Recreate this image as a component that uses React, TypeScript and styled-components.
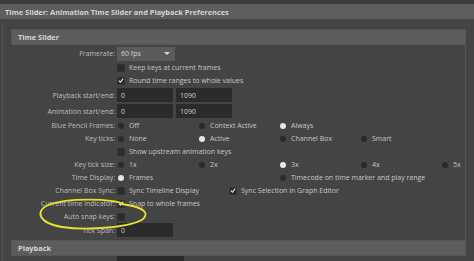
import React from 'react';
import styled, { createGlobalStyle } from 'styled-components';

const GlobalStyle = createGlobalStyle`
 html, body {
  margin: 0;
  padding: 0;
  background: #444444;
  overflow: hidden;
 }
 body {
  font-family: 'Open Sans', 'Noto Sans', sans-serif;
  color: #c6c6c6;
 }
`;

const Window = styled.div`
 position: relative;
 width: 474px;
 height: 261px;
 background: #444444;
 overflow: hidden;
`;

const TopStrip = styled.div`
 height: 4px;
 background: #3c3c3c;
`;

const TitleBar = styled.div`
 height: 15px;
 display: flex;
 align-items: center;
 padding-left: 5px;
 background: #5e5e5e;
 color: #d4d4d4;
 font-weight: 700;
 font-size: 7.4px;
 white-space: nowrap;
`;

const Frame = styled.div`
 margin: 3px 0 0 2px;
 border-left: 1px solid #555555;
 padding: 7px 8px 0 8px;
`;

const SectionHeader = styled.div`
 height: 14px;
 display: flex;
 align-items: center;
 padding-left: 6px;
 background: #5d5d5d;
 border: 1px solid #555555;
 color: #d6d6d6;
 font-weight: 700;
 font-size: 7.4px;
`;

const Panel = styled.div`
 border-right: 1px solid #555555;
 padding: 1px 0 3px;
`;

const Row = styled.div<{ $h?: number }>`
 display: grid;
 grid-template-columns: 104px 1fr;
 column-gap: 2px;
 align-items: center;
 height: ${({ $h }) => $h ?? 13}px;
 font-size: 7px;
 white-space: nowrap;
`;

const Label = styled.div`
 text-align: right;
 color: #bdbdbd;
`;

const Controls = styled.div`
 display: flex;
 align-items: center;
`;

const Dropdown = styled.div`
 width: 58px;
 height: 14px;
 box-sizing: border-box;
 display: flex;
 align-items: center;
 justify-content: space-between;
 padding: 0 5px 0 4px;
 background: #5b5b5b;
 color: #d2d2d2;
`;

const Arrow = styled.span`
 width: 0;
 height: 0;
 border-left: 3px solid transparent;
 border-right: 3px solid transparent;
 border-top: 3px solid #d8d8d8;
`;

const Field = styled.div<{ $w?: number }>`
 width: ${({ $w }) => $w ?? 56}px;
 height: 14px;
 box-sizing: border-box;
 display: flex;
 align-items: center;
 padding-left: 4px;
 margin-right: 3px;
 background: #2b2b2b;
 color: #cfcfcf;
`;

const Box = styled.span`
 width: 8px;
 height: 8px;
 box-sizing: border-box;
 display: inline-flex;
 align-items: center;
 justify-content: center;
 background: #2b2b2b;
 border: 1px solid #333333;
 margin-right: 4px;
 flex-shrink: 0;
`;

const Option = styled.div<{ $w?: number }>`
 display: flex;
 align-items: center;
 width: ${({ $w }) => ($w ? `${$w}px` : 'auto')};
 flex-shrink: 0;
`;

const Dot = styled.span<{ $on?: boolean }>`
 width: 6px;
 height: 6px;
 border-radius: 50%;
 margin: 0 5px 0 1px;
 background: ${({ $on }) => ($on ? '#e6e6e6' : '#2a2a2a')};
 flex-shrink: 0;
`;

const Annotation = styled.svg`
 position: absolute;
 left: 0;
 top: 0;
 pointer-events: none;
`;

const Tick = () => (
 <svg width="7" height="7" viewBox="0 0 7 7">
  <path d="M1 3.6 L2.8 5.5 L6 1.3" fill="none" stroke="#e8e8e8" strokeWidth="1.3" />
 </svg>
);

const Check = ({ on, label }: { on?: boolean; label?: string }) => (
 <Option>
  <Box>{on && <Tick />}</Box>
  {label}
 </Option>
);

const Radio = ({ on, label, w = 81 }: { on?: boolean; label: string; w?: number }) => (
 <Option $w={w}>
  <Dot $on={on} />
  {label}
 </Option>
);

export default function App() {
 return (
  <>
   <GlobalStyle />
   <Window>
    <TopStrip />
    <TitleBar>Time Slider: Animation Time Slider and Playback Preferences</TitleBar>
    <Frame>
     <SectionHeader>Time Slider</SectionHeader>
     <Panel>
      <Row $h={15}>
       <Label>Framerate:</Label>
       <Controls>
        <Dropdown>
         60 fps
         <Arrow />
        </Dropdown>
       </Controls>
      </Row>
      <Row>
       <span />
       <Controls>
        <Check label="Keep keys at current frames" />
       </Controls>
      </Row>
      <Row>
       <span />
       <Controls>
        <Check on label="Round time ranges to whole values" />
       </Controls>
      </Row>
      <Row $h={16}>
       <Label>Playback start/end:</Label>
       <Controls>
        <Field>0</Field>
        <Field>1090</Field>
       </Controls>
      </Row>
      <Row $h={16}>
       <Label>Animation start/end:</Label>
       <Controls>
        <Field>0</Field>
        <Field>1090</Field>
       </Controls>
      </Row>
      <Row>
       <Label>Blue Pencil Frames:</Label>
       <Controls>
        <Radio label="Off" />
        <Radio label="Context Active" />
        <Radio on label="Always" />
       </Controls>
      </Row>
      <Row>
       <Label>Key ticks:</Label>
       <Controls>
        <Radio label="None" />
        <Radio on label="Active" />
        <Radio label="Channel Box" />
        <Radio label="Smart" />
       </Controls>
      </Row>
      <Row>
       <span />
       <Controls>
        <Check label="Show upstream animation keys" />
       </Controls>
      </Row>
      <Row>
       <Label>Key tick size:</Label>
       <Controls>
        <Radio label="1x" />
        <Radio label="2x" />
        <Radio on label="3x" />
        <Radio label="4x" />
        <Radio label="5x" w={30} />
       </Controls>
      </Row>
      <Row>
       <Label>Time Display:</Label>
       <Controls>
        <Radio on label="Frames" w={162} />
        <Radio label="Timecode on time marker and play range" w={180} />
       </Controls>
      </Row>
      <Row>
       <Label>Channel Box Sync:</Label>
       <Controls>
        <Option $w={112}>
         <Box />
         Sync Timeline Display
        </Option>
        <Check on label="Sync Selection in Graph Editor" />
       </Controls>
      </Row>
      <Row>
       <Label>Current time indicator:</Label>
       <Controls>
        <Check on label="Snap to whole frames" />
       </Controls>
      </Row>
      <Row>
       <Label>Auto snap keys:</Label>
       <Controls>
        <Check />
       </Controls>
      </Row>
      <Row $h={14}>
       <Label>Tick Span:</Label>
       <Controls>
        <Field>0</Field>
       </Controls>
      </Row>
     </Panel>
     <SectionHeader>Playback</SectionHeader>
     <Row $h={14}>
      <span />
      <Controls>
       <Field $w={67} />
      </Controls>
     </Row>
    </Frame>
    <Annotation width="474" height="261" viewBox="0 0 474 261">
     <path
      d="M124 204 C 112 199, 70 197, 48 205 C 35 211, 38 223, 62 227 C 88 231, 132 227, 143 219 C 151 212, 140 206, 121 204"
      fill="none"
      stroke="#e8e22a"
      strokeWidth="1.8"
      strokeLinecap="round"
     />
    </Annotation>
   </Window>
  </>
 );
}
